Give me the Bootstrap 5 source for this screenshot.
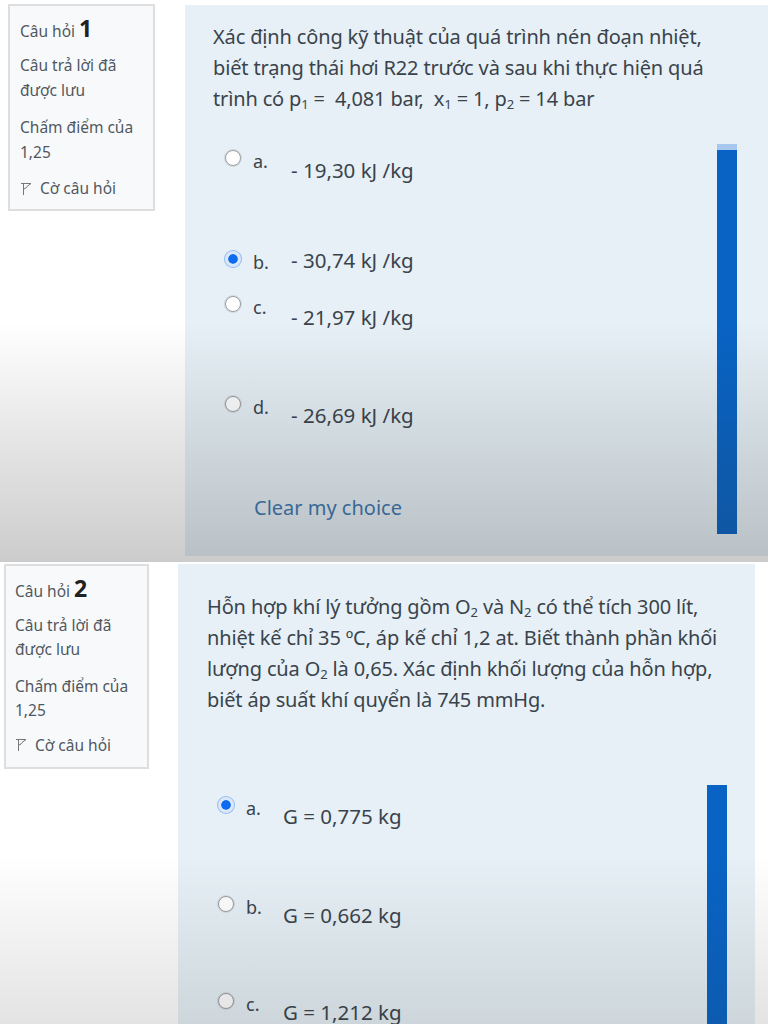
<!DOCTYPE html>
<html lang="vi">
<head>
    <meta charset="UTF-8">
    <meta name="viewport" content="width=device-width, initial-scale=1.0">
    <title>Câu hỏi</title>
    <link rel="stylesheet" href="https://cdn.jsdelivr.net/npm/bootstrap@5.3.0/dist/css/bootstrap.min.css">
    <style>
        html, body { height: 1024px; overflow: hidden; }
        body { background: #fff; color: #3a434b; font-family: "Noto Sans", "Open Sans", sans-serif; }

        .quiz-sec { position: relative; overflow: hidden; }
        .quiz-sec::after { content: ""; position: absolute; left: 0; right: 0; bottom: 0; pointer-events: none; }
        .sec-one { height: 562px; padding: 4px 0 0 8px; }
        .sec-one::after { height: 240px; background: linear-gradient(rgba(40,40,40,0), rgba(40,40,40,.24)); }
        .sec-two { height: 462px; padding: 2px 13px 0 4px; }
        .sec-two::after { height: 170px; background: linear-gradient(rgba(40,40,40,0), rgba(40,40,40,.13)); }

        .info-box { flex: none; background: #f8f9fb; border: 2px solid #dcdee0; font-size: 15.5px; line-height: 25px; color: #50585f; white-space: nowrap; }
        .sec-one .info-box { width: 147px; height: 207px; padding: 10px 0 0 10px; }
        .sec-two .info-box { width: 145px; height: 205px; padding: 10px 0 0 9px; line-height: 24.5px; }
        .q-num { font-size: 23px; font-weight: 700; color: #222; line-height: 25px; }
        .info-line { margin-top: 9px; }
        .info-line + .info-line { margin-top: 12px; }
        .info-flag { margin-top: 11px; }
        .sec-two .info-flag { margin-top: 10px; }

        .q-panel { background: #e6f0f6; flex: 1 1 auto; }
        .sec-one .q-panel { height: 551px; margin: 1px 0 0 30px; padding: 16px 31px 0 28px; }
        .sec-two .q-panel { height: 470px; margin: 0 0 0 29px; padding: 27px 28px 0 29px; }
        .q-text { font-size: 20px; line-height: 31px; letter-spacing: -.15px; white-space: nowrap; }
        .q-text sub { font-size: .65em; }

        .opt-list { flex: 1 1 auto; font-size: 20.5px; }
        .sec-one .opt-list { padding-left: 12px; }
        .sec-two .opt-list { padding-left: 11px; }
        .opt-row { display: flex; align-items: flex-start; }
        .opt-row .form-check-input { margin: 0; width: 16px; height: 16px; flex: none; border-color: #9aa0a6; box-shadow: 0 0 0 1px #d4d8dc; }
        .opt-row .form-check-input:checked { background-image: none; background-color: #0f6cf0; background-clip: padding-box; border: 3px solid #dbe8fa; box-shadow: 0 0 0 1px #93bcf0; }
        .opt-letter { width: 50px; padding-left: 12px; font-size: 18px; line-height: 22px; flex: none; }
        .opt-value { line-height: 26px; }

        .bar-col { width: 20px; flex: none; background: #0863c4; }
        .sec-one .bar-col { margin-top: 30px; height: 390px; border-top: 6px solid #a6c8ef; }
        .sec-two .bar-col { margin-top: 70px; height: 400px; }

        .q1-a { margin-top: 36px; height: 101px; }
        .q1-a .opt-value { margin-top: 7px; }
        .q1-b { height: 45px; }
        .q1-b .opt-value { margin-top: -4px; }
        .q1-c { height: 100px; }
        .q1-c .opt-value { margin-top: 8px; }
        .q1-d { height: 96px; }
        .q1-d .opt-value { margin-top: 6px; }
        .clear-link { color: #3d77ad; text-decoration: none; font-size: 20px; line-height: 26px; margin-left: 29px; }
        .q2-a { margin-top: 82px; height: 99px; }
        .q2-b { height: 97px; }
        .q2-c { height: 30px; }
        .q2-a .opt-value, .q2-b .opt-value, .q2-c .opt-value { margin-top: 6px; margin-left: -1px; }
    </style>
</head>
<body>

<!-- Question 1 -->
<section class="quiz-sec sec-one d-flex align-items-start">
    <div class="info-box">
        <div>Câu hỏi <span class="q-num">1</span></div>
        <div class="info-line">Câu trả lời đã<br>được lưu</div>
        <div class="info-line">Chấm điểm của<br>1,25</div>
        <div class="info-flag d-flex align-items-center gap-2">
            <svg width="12" height="14" viewBox="0 0 12 14" fill="none" stroke="#777" stroke-width="1"><path d="M1 1.5h10L7 4.5 6 6 4 7M3.5 2v11"/></svg>
            <span>Cờ câu hỏi</span>
        </div>
    </div>
    <div class="q-panel">
        <div class="q-text">Xác định công kỹ thuật của quá trình nén đoạn nhiệt,<br>biết trạng thái hơi R22 trước và sau khi thực hiện quá<br>trình có p<sub>1</sub> = &nbsp;4,081 bar, &nbsp;x<sub>1</sub> = 1, p<sub>2</sub> = 14 bar</div>
        <div class="d-flex">
            <div class="opt-list">
                <div class="opt-row q1-a">
                    <input class="form-check-input" type="radio" name="q1">
                    <span class="opt-letter">a.</span>
                    <span class="opt-value">- 19,30 kJ /kg</span>
                </div>
                <div class="opt-row q1-b">
                    <input class="form-check-input" type="radio" name="q1" checked>
                    <span class="opt-letter">b.</span>
                    <span class="opt-value">- 30,74 kJ /kg</span>
                </div>
                <div class="opt-row q1-c">
                    <input class="form-check-input" type="radio" name="q1">
                    <span class="opt-letter">c.</span>
                    <span class="opt-value">- 21,97 kJ /kg</span>
                </div>
                <div class="opt-row q1-d">
                    <input class="form-check-input" type="radio" name="q1">
                    <span class="opt-letter">d.</span>
                    <span class="opt-value">- 26,69 kJ /kg</span>
                </div>
                <a href="#" class="clear-link d-inline-block">Clear my choice</a>
            </div>
            <div class="bar-col"></div>
        </div>
    </div>
</section>

<!-- Question 2 -->
<section class="quiz-sec sec-two d-flex align-items-start">
    <div class="info-box">
        <div>Câu hỏi <span class="q-num">2</span></div>
        <div class="info-line">Câu trả lời đã<br>được lưu</div>
        <div class="info-line">Chấm điểm của<br>1,25</div>
        <div class="info-flag d-flex align-items-center gap-2">
            <svg width="12" height="14" viewBox="0 0 12 14" fill="none" stroke="#777" stroke-width="1"><path d="M1 1.5h10L7 4.5 6 6 4 7M3.5 2v11"/></svg>
            <span>Cờ câu hỏi</span>
        </div>
    </div>
    <div class="q-panel">
        <div class="q-text">Hỗn hợp khí lý tưởng gồm O<sub>2</sub> và N<sub>2</sub> có thể tích 300 lít,<br>nhiệt kế chỉ 35 ºC, áp kế chỉ 1,2 at. Biết thành phần khối<br>lượng của O<sub>2</sub> là 0,65. Xác định khối lượng của hỗn hợp,<br>biết áp suất khí quyển là 745 mmHg.</div>
        <div class="d-flex">
            <div class="opt-list">
                <div class="opt-row q2-a">
                    <input class="form-check-input" type="radio" name="q2" checked>
                    <span class="opt-letter">a.</span>
                    <span class="opt-value">G = 0,775 kg</span>
                </div>
                <div class="opt-row q2-b">
                    <input class="form-check-input" type="radio" name="q2">
                    <span class="opt-letter">b.</span>
                    <span class="opt-value">G = 0,662 kg</span>
                </div>
                <div class="opt-row q2-c">
                    <input class="form-check-input" type="radio" name="q2">
                    <span class="opt-letter">c.</span>
                    <span class="opt-value">G = 1,212 kg</span>
                </div>
            </div>
            <div class="bar-col"></div>
        </div>
    </div>
</section>

<script src="https://cdn.jsdelivr.net/npm/bootstrap@5.3.0/dist/js/bootstrap.bundle.min.js"></script>
</body>
</html>
